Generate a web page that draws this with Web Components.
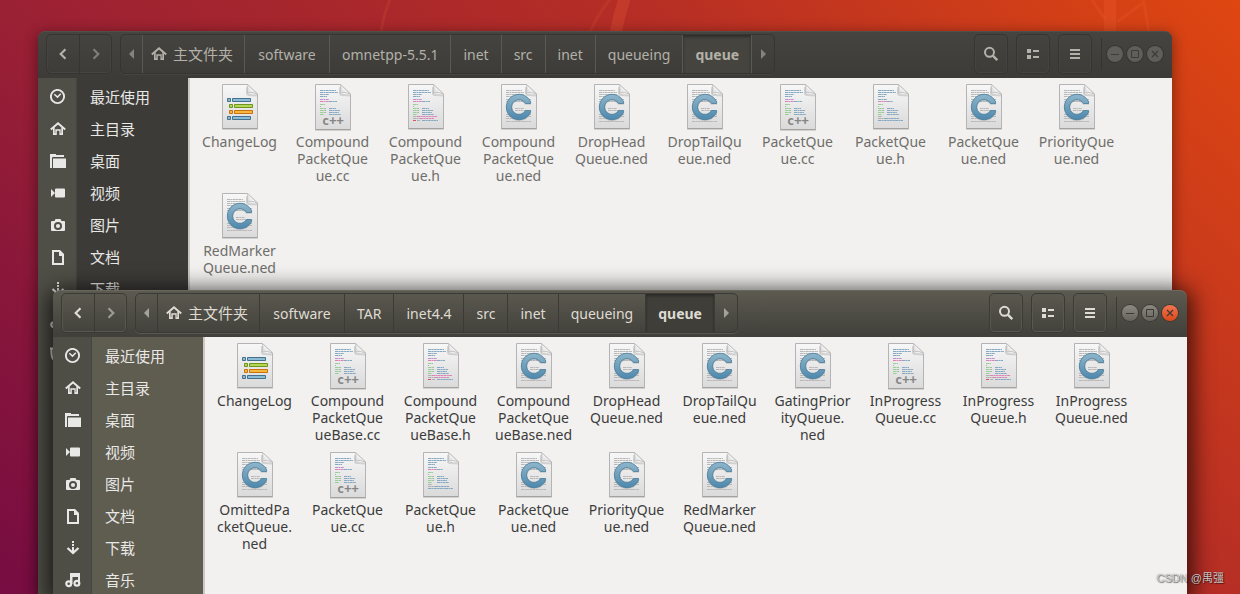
<!DOCTYPE html>
<html lang="zh-CN">
<head>
<meta charset="utf-8">
<title>Files</title>
<style>
  html, body { height: 100%; margin: 0; }
  body { overflow: hidden; font: 14px/17px "Noto Sans", "Noto Sans CJK SC", sans-serif; }
</style>
</head>
<body>
<desk-top></desk-top>

<script>
const ICONS = {
  back: '<path d="M10.500 3.200 5.700 8l4.800 4.800" fill="none" stroke="currentColor" stroke-width="2.200"/>',
  forward: '<path d="M5.500 3.200 10.300 8l-4.800 4.800" fill="none" stroke="currentColor" stroke-width="2.200"/>',
  left: '<path d="M10 3v10L5 8z" fill="currentColor"/>',
  right: '<path d="M6 3v10l5-5z" fill="currentColor"/>',
  home: '<path d="M.8 8.600 8 2.300l7.200 6.300" fill="none" stroke="currentColor" stroke-width="2"/><path d="M3 7.500v6.500h3.800V9.800h2.600V14H13V7.500L11.300 6v6.300h-.6V8.300H5.300v4H4.700V6z" fill="currentColor"/>',
  search: '<circle cx="6.500" cy="6.300" r="4.500" fill="none" stroke="currentColor" stroke-width="2"/><path d="m9.800 9.600 4.500 4.600" stroke="currentColor" stroke-width="2.400"/>',
  list: '<path d="M2 3h4v4H2zM2 9h4v4H2zM8 4h6v2H8zM8 10h6v2H8z" fill="currentColor"/>',
  menu: '<path d="M3 3h10v2H3zM3 7h10v2H3zM3 11h10v2H3z" fill="currentColor"/>',
  recent: '<circle cx="7.500" cy="7.500" r="6.600" fill="none" stroke="currentColor" stroke-width="1.900"/><path d="m4.300 5.200 3.200 2.900 3.300-3.300" fill="none" stroke="currentColor" stroke-width="1.500"/>',
  desktop: '<path d="M0 1h6v1h8v3H3v10H0z" fill="currentColor"/><path d="M2.500 15V5.500H16V15z" fill="currentColor"/><path d="M2.500 15V4.500h11.500" fill="none" stroke="#4f4e46"/>',
  video: '<path d="M1 4v8l4-4zM6 3.500h8q1 0 1 1v7q0 1-1 1H6q-1 0-1-1v-7q0-1 1-1z" fill="currentColor"/>',
  camera: '<path fill-rule="evenodd" d="M2 4h2.500l1-2h5l1 2H14q1 0 1 1v8q0 1-1 1H2q-1 0-1-1V5q0-1 1-1zM8 5a4 4 0 1 0 0 8 4 4 0 0 0 0-8z" fill="currentColor"/><circle cx="8" cy="9" r="2.100" fill="currentColor"/>',
  document: '<path fill-rule="evenodd" d="M2 1h8l4 4v11H2zM4 3v11h8V7H9V3z" fill="currentColor"/>',
  download: '<path d="M7 1h2v2H7zM7 4h2v2H7zM7 7h2v5H7z" fill="currentColor"/><path d="m2.500 8 5.500 5 5.500-5" fill="none" stroke="currentColor" stroke-width="2.200"/>',
  music: '<path d="M5 1h10v11h-2V5H7.500v7H5z" fill="currentColor"/><circle cx="3.700" cy="11.800" r="2.400" fill="none" stroke="currentColor" stroke-width="2.200"/><circle cx="11.900" cy="11.200" r="2.400" fill="none" stroke="currentColor" stroke-width="2.200"/>',
  trash: '<path d="M0 3.500h16M5.500 3.500v-2h5v2M1.500 4q-.5 10 3 11h7q3.500-1 3-11" fill="none" stroke="currentColor" stroke-width="2"/>'
};

class UiIcon extends HTMLElement {
  connectedCallback() {
    this.attachShadow({ mode: 'open' }).innerHTML =
      `<style>:host{display:block;flex:none;width:16px;height:16px}svg{display:block}</style>
       <svg width="16" height="16" viewBox="0 0 16 16" aria-hidden="true">${ICONS[this.getAttribute('name')]}</svg>`;
  }
}
customElements.define('ui-icon', UiIcon);

const lines = (rows, color) => rows.map(([x, y, w, c]) =>
  `<path d="M${x} ${y + .5}h${w}" stroke="${c || color}" stroke-dasharray="3 .4 2 .3"/>`).join('');
const B = '#85a9c2', P = '#c78bd0', K = '#dc84b8', G = '#98cf96', N = '#b0b0b0';
const CODE = [[5,6,16,B],[5,8,18,B],[5,10,9,B],[5,12,7,B],[5,15,9,P],[5,17,9,K],[14,17,8,B],
  [5,20,5,G],[5,22,1,N],[5,24,5,G],[5,26,5,G],[5,28,5,G],[5,30,4,G],[10,24,1,N],[10,26,1,N],[10,28,1,N],
  [14,24,7,B],[14,26,11,B],[14,28,10,B],[14,30,12,B]];
const CODE_END = [[5,32,4,N],[9,32,20,K],[5,34,7,N],[12,34,14,K],[5,36,3,'#e05060'],[9,36,3,N],[14,36,16,B]];
const CODE_BLUE = [[5,6,16,B],[5,8,18,B],[5,10,9,B],[5,12,7,B],[5,15,9,B],[5,17,9,K],[14,17,6,B]];
const TEXT = [[5,6,16],[5,8,18],[5,10,18],[5,12,18],[5,15,25],[5,17,25],[14,24,9],[14,26,12],[5,30,25],[5,32,25],[5,34,20],[5,37,25]];
const bar = (x, y, dark, light) =>
  `<path d="M${x + .5} ${y + .5}h3v3h-3zM${x + 5.5} ${y + .5}h18v3h-18z" fill="${light}" stroke="${dark}"/>`;
const ART = {
  log: bar(5,14,'#43718e','#8cbbd6') + bar(7,20,'#6d951c','#b5d557') + bar(7,26,'#c8710d','#f6b73f') + bar(5,32,'#43718e','#8cbbd6'),
  cc: lines(CODE) + '<text x="7" y="41" font-family="DejaVu Sans Mono, monospace" font-weight="700" font-size="12" fill="#858585">c++</text>',
  h: lines(CODE.concat(CODE_END)),
  hb: lines(CODE.slice(7).concat(CODE_BLUE, CODE_END.slice(0, 1), [[5,34,7,N],[12,34,14,B],[5,36,25,B]])),
  ned: lines(TEXT, '#b8b8b8') +
    '<path d="M30 19A13 13 0 1 0 30 29V27.300H24.200A7 7 0 1 1 24.200 20.700H30Z" fill="#999" opacity=".4"/>' +
    '<path d="M29.600 17.800A12.700 12.700 0 1 0 29.600 28.200V26.500H24.500A7.400 7.400 0 1 1 24.500 19.500H29.600Z" fill="url(#c)" stroke="#477b9a" stroke-width=".8"/>'
};
class FileIcon extends HTMLElement {
  connectedCallback() {
    const k = this.getAttribute('kind');
    const b = k === 'cc' ? 46 : 45;
    this.attachShadow({ mode: 'open' }).innerHTML = `
      <style>:host{display:block;width:36px;height:48px}svg{display:block}</style>
      <svg width="36" height="48" viewBox="0 0 36 48" aria-hidden="true">
        <defs>
          <linearGradient id="p" x2="0" y2="1"><stop stop-color="#f7f7f7"/><stop offset="1" stop-color="#dadada"/></linearGradient>
          <linearGradient id="c" x2="0" y2="1"><stop stop-color="#8eb6cc"/><stop offset=".5" stop-color="#6f9fba"/><stop offset="1" stop-color="#4d88ae"/></linearGradient>
          <linearGradient id="f" x2="1" y2="0" y1="1"><stop offset=".2" stop-color="#ddd"/><stop offset=".6" stop-color="#fff"/></linearGradient>
        </defs>
        <path d="M0 ${b}.500h36" stroke="#000" opacity=".12"/>
        <path d="M.5.5h25l10 9.500v${b - 10.5}H.5z" fill="url(#p)" stroke="#b4b4b4"/>
        <path d="M.5 ${b - .5}h35" stroke="#a2a2a2"/>
        ${ART[k]}
        <path d="M25 3v6q0 2 2 2l8 .5" fill="none" stroke="#000" stroke-width="2" opacity=".13"/>
        <path d="M25.500.5q1 3-.5 8.500 6-1.500 10.500 1z" fill="url(#f)" stroke="#b9b9b9" stroke-width=".8"/>
      </svg>`;
  }
}
customElements.define('file-icon', FileIcon);

class FileItem extends HTMLElement {
  connectedCallback() {
    this.attachShadow({ mode: 'open' }).innerHTML = `
      <style>
        :host{display:flex;flex-direction:column;align-items:center;gap:1px;text-align:center;white-space:nowrap}
      </style>
      <file-icon kind="${this.getAttribute('kind')}"></file-icon><span><slot></slot></span>`;
  }
}
customElements.define('file-item', FileItem);

class PathBar extends HTMLElement {
  connectedCallback() {
    const parts = this.getAttribute('parts').split('/');
    this.attachShadow({ mode: 'open' }).innerHTML = `
      <style>
        :host{display:flex;box-sizing:border-box;height:40px;border:1px solid var(--line);border-radius:5px;box-shadow:inset 0 1px var(--shine),0 1px var(--shine);overflow:hidden}
        button{display:flex;align-items:center;justify-content:center;gap:6px;box-sizing:border-box;margin:0;padding:0 12px;border:0;border-right:1px solid var(--sep);background:none;color:inherit;font:inherit;cursor:pointer}
        .arrow{width:22px;padding:0 2px}
        .arrow ui-icon{opacity:.6}
        .arrow.end{border:0}
        .home{padding:0 11px 0 8px;font-size:15px}
        .home + button{min-width:85px}
        .current{font-weight:700;background:var(--pressed);box-shadow:inset 0 2px 3px rgba(0,0,0,.35)}
      </style>
      <button class="arrow" aria-label="左"><ui-icon name="left"></ui-icon></button>
      <button class="home"><ui-icon name="home"></ui-icon>主文件夹</button>
      ${parts.map((p, i) => `<button class="${i === parts.length - 1 ? 'current' : ''}">${p}</button>`).join('')}
      <button class="arrow end" aria-label="右"><ui-icon name="right"></ui-icon></button>`;
  }
}
customElements.define('path-bar', PathBar);

class HeaderBar extends HTMLElement {
  connectedCallback() {
    this.attachShadow({ mode: 'open' }).innerHTML = `
      <style>
        :host{display:flex;align-items:flex-start;gap:8px;box-sizing:border-box;height:47px;padding:2px 9px 0 8px;background:var(--bar);color:var(--fg);border-top:1px solid var(--edge);border-radius:7px 7px 0 0}
        .nav,.tool{display:flex;box-sizing:border-box;height:40px;border:1px solid var(--line);border-radius:5px;box-shadow:inset 0 0 0 1px var(--shine)}
        button{margin:0;padding:0;border:0;background:none;color:inherit;font:inherit;cursor:pointer}
        .nav button{display:grid;place-items:center;width:32px}
        .nav button+button{border-left:1px solid var(--line)}
        .nav button+button ui-icon{opacity:.55}
        .tool{width:34px;align-items:center;justify-content:center}
        .space{flex:1}
        .win{display:flex;align-items:center;gap:4px;height:40px}
        .win::before{content:"";width:1px;height:32px;margin:0 1px;background:var(--line)}
        .win button{box-sizing:border-box;width:16px;height:16px;border-radius:50%;background:var(--knob);color:var(--glyph);box-shadow:0 0 0 1px var(--line)}
        .win button.close{background:var(--close)}
        .win svg{display:block}
      </style>
      <div class="nav"><button aria-label="后退"><ui-icon name="back"></ui-icon></button><button aria-label="前进"><ui-icon name="forward"></ui-icon></button></div>
      <path-bar parts="${this.getAttribute('parts')}"></path-bar>
      <div class="space"></div>
      <button class="tool" aria-label="搜索"><ui-icon name="search"></ui-icon></button>
      <button class="tool" aria-label="视图"><ui-icon name="list"></ui-icon></button>
      <button class="tool" aria-label="菜单"><ui-icon name="menu"></ui-icon></button>
      <div class="win">
        <button aria-label="最小化"><svg width="16" height="16" stroke="currentColor"><path d="M4 8.500h8"/></svg></button>
        <button aria-label="最大化"><svg width="16" height="16" fill="none" stroke="currentColor"><path d="M4.500 4.500h7v7h-7z"/></svg></button>
        <button class="close" aria-label="关闭"><svg width="16" height="16" stroke="currentColor" stroke-width="1.200"><path d="m5 5 6 6m0-6-6 6"/></svg></button>
      </div>`;
  }
}
customElements.define('header-bar', HeaderBar);

class SideBar extends HTMLElement {
  connectedCallback() {
    const rows = [['recent','最近使用'],['home','主目录'],['desktop','桌面'],['video','视频'],['camera','图片'],['document','文档'],['download','下载'],['music','音乐'],['trash','回收站']];
    const named = Number(this.getAttribute('named'));
    this.attachShadow({ mode: 'open' }).innerHTML = `
      <style>
        :host{display:block;flex:none;box-sizing:border-box;width:152px;padding-top:3px;border-right:2px solid #cbc9c6;background:linear-gradient(90deg,var(--rail) 38px,var(--railedge) 38px,var(--railedge) 39px,var(--side) 39px);font-size:15px;color:#e8e8e6;overflow:hidden}
        a{display:flex;align-items:center;gap:24px;height:32px;padding-left:12px;color:inherit;text-decoration:none}
      </style>
      ${rows.slice(0, Number(this.getAttribute('rows'))).map(([i, t], n) =>
        n < named ? `<a href="#"><ui-icon name="${i}"></ui-icon>${t}</a>` : `<a href="#" aria-label="${t}"><ui-icon name="${i}"></ui-icon></a>`).join('')}`;
  }
}
customElements.define('side-bar', SideBar);

class FileWindow extends HTMLElement {
  connectedCallback() {
    this.attachShadow({ mode: 'open' }).innerHTML = `
      <style>
        :host{display:flex;flex-direction:column;border-radius:7px 7px 0 0;box-shadow:0 3px 14px 1px rgba(0,0,0,.4);
          --bar:linear-gradient(#454440,#3c3b37);--fg:#b3b1a8;--edge:#504f49;--line:#363531;--shine:#454440;--sep:#5a5953;--pressed:#45443f;
          --knob:#5f5e58;--close:#5f5e58;--glyph:#3d3c38;--rail:#504f47;--railedge:#46453f;--side:#3d3b38;--label:#6f6e6b}
        :host([active]){box-shadow:0 4px 22px 5px rgba(0,0,0,.7);
          --bar:linear-gradient(#5c5a50,#403f3a);--fg:#dfdbd2;--edge:#6a685d;--line:#3b3a35;--shine:#59584f;--sep:#3b3a35;--pressed:#3f3e39;
          --knob:linear-gradient(#8b8980,#66645d);--close:linear-gradient(#f37450,#dc4717);--glyph:#3a3935;--rail:#4f4e46;--railedge:#45443e;--side:#5f5c50;--label:#3c3c3c}
        main{display:flex;flex:1;min-height:0;background:#f2f1ef}
        section{display:grid;flex:1;grid-template-columns:repeat(auto-fill,93px);grid-auto-rows:109px;padding:6px 0 0 3px;color:var(--label);overflow:hidden}
      </style>
      <header-bar parts="${this.getAttribute('parts')}"></header-bar>
      <main><side-bar rows="${this.getAttribute('rows')}" named="${this.getAttribute('named')}"></side-bar><section><slot></slot></section></main>`;
  }
}
customElements.define('file-window', FileWindow);

const items = list => list.map(([k, t]) => `<file-item kind="${k}">${t.replaceAll('|', '<br>')}</file-item>`).join('');
const OLD = [['log','ChangeLog'],['cc','Compound|PacketQue|ue.cc'],['h','Compound|PacketQue|ue.h'],['ned','Compound|PacketQue|ue.ned'],['ned','DropHead|Queue.ned'],
  ['ned','DropTailQu|eue.ned'],['cc','PacketQue|ue.cc'],['hb','PacketQue|ue.h'],['ned','PacketQue|ue.ned'],['ned','PriorityQue|ue.ned'],['ned','RedMarker|Queue.ned']];
const NEW = [['log','ChangeLog'],['cc','Compound|PacketQue|ueBase.cc'],['h','Compound|PacketQue|ueBase.h'],['ned','Compound|PacketQue|ueBase.ned'],['ned','DropHead|Queue.ned'],
  ['ned','DropTailQu|eue.ned'],['ned','GatingPrior|ityQueue.|ned'],['cc','InProgress|Queue.cc'],['h','InProgress|Queue.h'],['ned','InProgress|Queue.ned'],
  ['ned','OmittedPa|cketQueue.|ned'],['cc','PacketQue|ue.cc'],['hb','PacketQue|ue.h'],['ned','PacketQue|ue.ned'],['ned','PriorityQue|ue.ned'],['ned','RedMarker|Queue.ned']];

class DeskTop extends HTMLElement {
  connectedCallback() {
    this.attachShadow({ mode: 'open' }).innerHTML = `
      <style>
        :host{display:block;position:relative;height:100vh;overflow:hidden;background:linear-gradient(45deg,#760c42,#9a2034 32%,#b62e25 67%,#df4711)}
        .streaks{position:absolute;top:0;left:0}
        file-window{position:absolute;bottom:0}
        .rear{top:31px;left:38px;right:68px}
        .front{top:290px;left:53px;right:53px}
        .mark{position:absolute;right:16px;bottom:7px;font:11px/18px "Liberation Sans","Noto Sans CJK SC",sans-serif;color:rgba(235,235,235,.85);text-shadow:0 0 1px rgba(0,0,0,.6),1px 1px 1px rgba(0,0,0,.5)}
      </style>
      <svg class="streaks" width="1240" height="31" fill="none" stroke="#ff7040" aria-hidden="true">
        <path d="M390-1Q384 14 381 32M611-2Q598 14 590 32" stroke-width="3" opacity=".12"/>
        <path d="M625-2Q619 14 616 32" stroke-width="12" opacity=".2"/>
        <path d="M1110 0v32" stroke-width="12" opacity=".18"/>
        <path d="m1090-3 15 22M1117 22l27-20M1143-2l6 34" stroke-width="3" opacity=".14"/>
      </svg>
      <file-window class="rear" parts="software/omnetpp-5.5.1/inet/src/inet/queueing/queue" rows="9" named="7">${items(OLD)}</file-window>
      <file-window class="front" active parts="software/TAR/inet4.4/src/inet/queueing/queue" rows="8" named="8">${items(NEW)}</file-window>
      <div class="mark">CSDN @禺彊</div>`;
  }
}
customElements.define('desk-top', DeskTop);
</script>
</body>
</html>
